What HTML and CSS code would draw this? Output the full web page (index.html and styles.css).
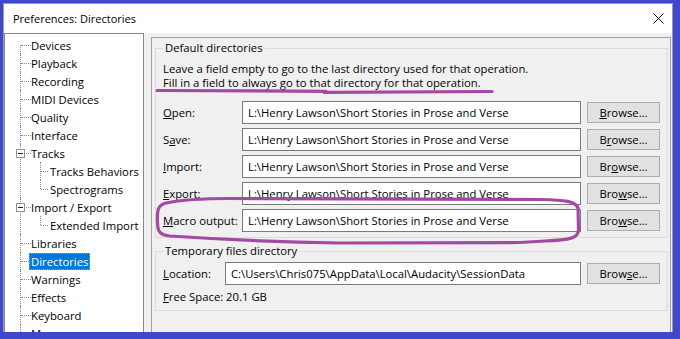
FILE: index.html
```html
<!DOCTYPE html>
<html lang="en">
  <head>
    <meta charset="UTF-8" />
    <title>Preferences: Directories</title>
    <link rel="stylesheet" href="styles.css">
  </head>
  <body>
    <div class="window">
      <div class="title-bar">
        <span>Preferences: Directories</span>
        <svg class="close" width="11" height="11" viewBox="0 0 11 11">
          <path d="M0.5 0.5 L10.5 10.5 M10.5 0.5 L0.5 10.5" stroke="#000" stroke-width="1" fill="none" />
        </svg>
      </div>

      <div class="main">
        <div class="tree-box">
          <ul class="tree">
            <li><div class="node"><span class="item">Devices</span></div></li>
            <li><div class="node"><span class="item">Playback</span></div></li>
            <li><div class="node"><span class="item">Recording</span></div></li>
            <li><div class="node"><span class="item">MIDI Devices</span></div></li>
            <li><div class="node"><span class="item">Quality</span></div></li>
            <li><div class="node"><span class="item">Interface</span></div></li>
            <li>
              <i class="toggle"></i>
              <div class="node"><span class="item">Tracks</span></div>
              <ul>
                <li><div class="node"><span class="item">Tracks Behaviors</span></div></li>
                <li><div class="node"><span class="item">Spectrograms</span></div></li>
              </ul>
            </li>
            <li>
              <i class="toggle"></i>
              <div class="node"><span class="item">Import / Export</span></div>
              <ul>
                <li><div class="node"><span class="item">Extended Import</span></div></li>
              </ul>
            </li>
            <li><div class="node"><span class="item">Libraries</span></div></li>
            <li><div class="node"><span class="item selected">Directories</span></div></li>
            <li><div class="node"><span class="item">Warnings</span></div></li>
            <li><div class="node"><span class="item">Effects</span></div></li>
            <li><div class="node"><span class="item">Keyboard</span></div></li>
            <li class="more"><div class="node"><span class="item">Mouse</span></div></li>
          </ul>
        </div>

        <div class="panel">
          <fieldset class="group">
            <legend>Default directories</legend>
            <p class="note">
              Leave a field empty to go to the last directory used for that operation.<br>
              Fill in a field to always go to that directory for that operation.
            </p>
            <div class="row">
              <label class="label"><u>O</u>pen:</label>
              <input class="path" type="text" readonly value="L:\Henry Lawson\Short Stories in Prose and Verse">
              <button class="browse"><u>B</u>rowse...</button>
            </div>
            <div class="row">
              <label class="label">S<u>a</u>ve:</label>
              <input class="path" type="text" readonly value="L:\Henry Lawson\Short Stories in Prose and Verse">
              <button class="browse">B<u>r</u>owse...</button>
            </div>
            <div class="row">
              <label class="label"><u>I</u>mport:</label>
              <input class="path" type="text" readonly value="L:\Henry Lawson\Short Stories in Prose and Verse">
              <button class="browse">Br<u>o</u>wse...</button>
            </div>
            <div class="row">
              <label class="label"><u>E</u>xport:</label>
              <input class="path" type="text" readonly value="L:\Henry Lawson\Short Stories in Prose and Verse">
              <button class="browse">Bro<u>w</u>se...</button>
            </div>
            <div class="row">
              <label class="label"><u>M</u>acro output:</label>
              <input class="path" type="text" readonly value="L:\Henry Lawson\Short Stories in Prose and Verse">
              <button class="browse">Bro<u>w</u>se...</button>
            </div>
          </fieldset>

          <fieldset class="group temp">
            <legend>Temporary files directory</legend>
            <div class="row">
              <label class="label"><u>L</u>ocation:</label>
              <input class="path" type="text" readonly value="C:\Users\Chris075\AppData\Local\Audacity\SessionData">
              <button class="browse">Brow<u>s</u>e...</button>
            </div>
            <p class="free"><u>F</u>ree Space: 20.1 GB</p>
          </fieldset>
        </div>
      </div>
    </div>

    <!-- marcas feitas a mao por cima da captura -->
    <svg class="marks" width="680" height="339" viewBox="0 0 680 339">
      <path d="M157 90.5 L326 91.3" />
      <path d="M324 92.3 L492 91.5" />
      <path d="M157.5 222 C157 211, 157.5 205, 166 203 C180 200, 200 198.5, 230 198.5 L540 199.5 C565 200, 576 201, 578 208 L578.5 230 C578.5 238, 570 240, 545 241 L520 242.5 L340 243 C260 242, 200 238, 170 236 C160 235, 157.5 232, 157.5 222" />
    </svg>
  </body>
</html>
```

FILE: styles.css
```css
* {
  box-sizing: border-box;
  margin: 0;
  padding: 0;
}

body {
  height: 339px;
  overflow: hidden;
  padding: 3px 7px 7px 3px;
  background-color: #3f48cc;
  font-family: "Open Sans", "Noto Sans", sans-serif;
  font-size: 11.3px;
  color: #000;
}

.window {
  display: flex;
  flex-direction: column;
  height: 329px;
  overflow: hidden;
  background-color: #f0f0f0;
  border: 1px solid #9a9aa8;
  border-bottom: 0;
}

.title-bar {
  display: flex;
  align-items: center;
  justify-content: space-between;
  height: 29px;
  padding: 0 8px 0 9px;
  background-color: #fff;
  font-size: 11px;
}

.main {
  flex: 1;
  display: flex;
  min-height: 0;
}

/* arvore da esquerda */
.tree-box {
  width: 140px;
  overflow: hidden;
  background-color: #fff;
  border: 1px solid #828790;
  border-bottom: 0;
}

.tree, .tree ul {
  list-style: none;
}

.tree {
  padding-top: 2px;
}

.tree li {
  position: relative;
  padding-left: 24px;
}

.tree li::before {
  content: "";
  position: absolute;
  left: 15px;
  top: 0;
  bottom: 0;
  border-left: 1px dotted #8c8c8c;
}

.tree > li:first-child::before {
  top: 9px;
}

.tree li::after {
  content: "";
  position: absolute;
  left: 16px;
  top: 9px;
  width: 10px;
  border-top: 1px dotted #8c8c8c;
}

.tree ul li {
  padding-left: 19px;
}

.tree ul li::before {
  left: 11px;
}

.tree ul li:last-child::before {
  bottom: auto;
  height: 9px;
}

.tree ul li::after {
  left: 12px;
  width: 7px;
}

.node {
  display: flex;
  align-items: center;
  height: 18px;
}

.item {
  height: 17px;
  line-height: 15px;
  padding: 0 1px;
  border: 1px solid transparent;
  white-space: nowrap;
}

.item.selected {
  background-color: #0078d7;
  color: #fff;
  border: 1px dotted #ff8728;
}

.toggle {
  position: absolute;
  z-index: 1;
  left: 11px;
  top: 5px;
  width: 9px;
  height: 9px;
  background-color: #fff;
  border: 1px solid #919191;
}

.toggle::after {
  content: "";
  position: absolute;
  left: 1px;
  top: 3px;
  width: 5px;
  height: 1px;
  background-color: #222;
}

/* painel da direita */
.panel {
  flex: 1;
  margin: 4px 1px 0 7px;
  padding: 2px 2px 0 3px;
  border: 1px solid #a0a0a0;
  border-bottom: 0;
}

.group {
  border: 1px solid #dcdcdc;
  padding: 6px 7px 5px;
}

.group legend {
  padding: 0 2px;
  line-height: 16px;
}

.group.temp {
  margin-top: 5px;
  padding: 3px 7px 6px;
}

.note {
  line-height: 14px;
  margin-bottom: 11px;
}

.row {
  display: flex;
  align-items: center;
  height: 23px;
  margin-bottom: 4px;
}

.row:last-child {
  margin-bottom: 0;
}

.label {
  width: 79px;
  flex-shrink: 0;
}

.temp .label {
  width: 62px;
}

.path {
  flex: 1;
  min-width: 0;
  height: 23px;
  padding: 0 5px;
  border: 1px solid #7a7a7a;
  background-color: #fff;
  font: inherit;
  color: #000;
  outline: 0;
}

.browse {
  width: 73px;
  height: 21px;
  margin-left: 6px;
  background-color: #e1e1e1;
  border: 1px solid #adadad;
  font: inherit;
  color: #000;
}

.free {
  margin-top: 5px;
  line-height: 14px;
}

.marks {
  position: absolute;
  top: 0;
  left: 0;
  pointer-events: none;
}

.marks path {
  fill: none;
  stroke: #a349a4;
  stroke-width: 3.2;
  stroke-linecap: round;
  stroke-linejoin: round;
}
```
